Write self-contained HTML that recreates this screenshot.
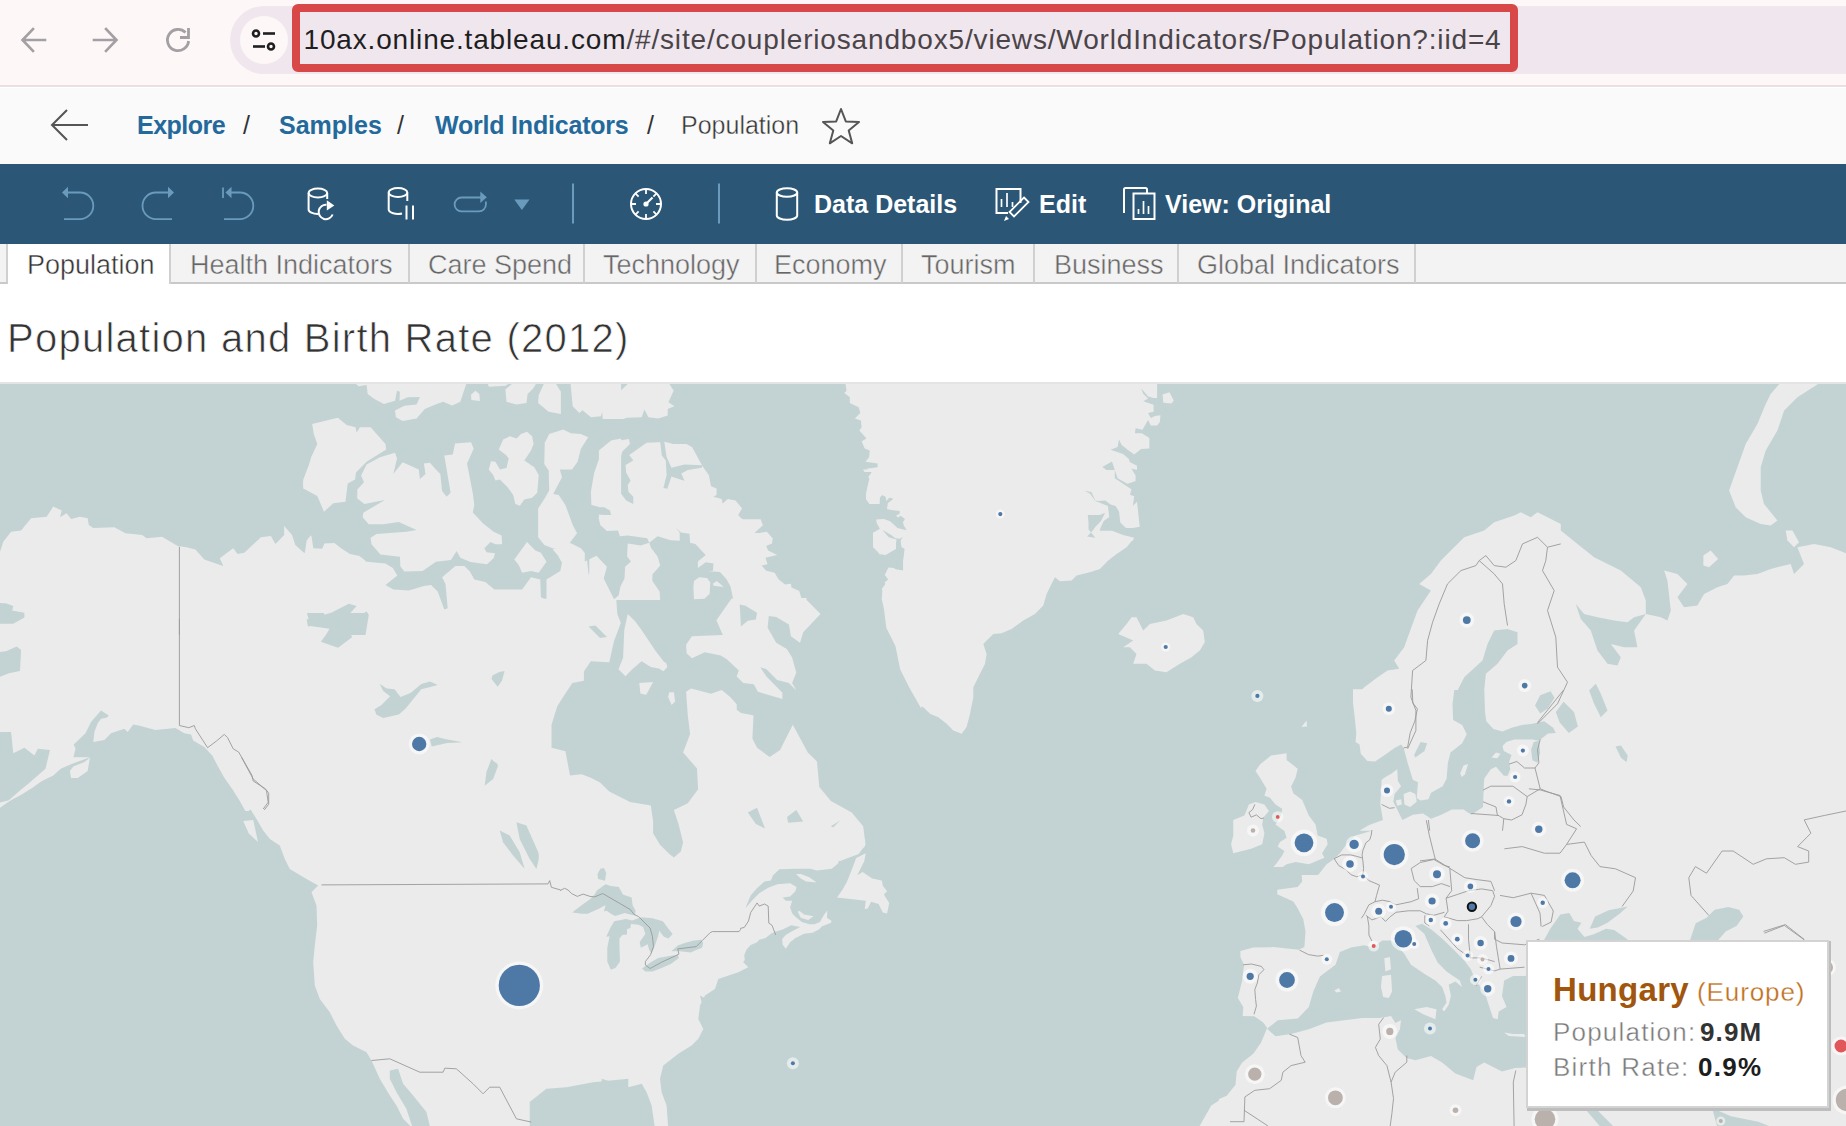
<!DOCTYPE html>
<html><head><meta charset="utf-8">
<style>
*{margin:0;padding:0;box-sizing:border-box}
html,body{width:1846px;height:1126px;overflow:hidden;background:#fff;font-family:"Liberation Sans",sans-serif}
.abs{position:absolute}
#chrome{position:absolute;left:0;top:0;width:1846px;height:87px;background:#fdf7f8;border-bottom:2px solid #eadfe3}
#pill{position:absolute;left:230px;top:6px;width:1700px;height:68px;border-radius:34px;background:#f0e6ee}
#pillc{position:absolute;left:240px;top:16px;width:48px;height:48px;border-radius:24px;background:#fdf7f8}
#redbox{position:absolute;left:292px;top:4px;width:1226px;height:68px;border:8px solid #d94848;border-radius:6px}
#url{position:absolute;left:303.5px;top:22px;font-size:28px;line-height:36px;white-space:nowrap;color:#1f1f1f;letter-spacing:0.84px}
#url span{color:#4a4448}
#crumbs{position:absolute;left:0;top:88px;width:1846px;height:76px;background:#fafafa}
.crumb{position:absolute;top:108px;font-size:25px;line-height:34px;white-space:nowrap}
.cb{color:#23699b;font-weight:bold}
#toolbar{position:absolute;left:0;top:164px;width:1846px;height:80px;background:#2b5676}
.tbtxt{position:absolute;top:188px;color:#fff;font-weight:bold;font-size:25px;line-height:32px;white-space:nowrap}
#tabs{position:absolute;left:0;top:244px;width:1846px;height:40px;background:#f3f3f3;border-bottom:2px solid #c9c9c9}
.tab{position:absolute;top:246px;height:40px;border-right:2px solid #d0d0d0;color:#666;font-size:27px;line-height:38px;white-space:nowrap;-webkit-text-stroke:0.45px #f3f3f3}
#title{position:absolute;left:7px;top:314px;font-size:40px;line-height:48px;color:#333;white-space:nowrap;letter-spacing:1.25px;-webkit-text-stroke:0.7px #fff}
.tt{white-space:nowrap;line-height:32px}
#mapwrap{position:absolute;left:0;top:382px;width:1846px;height:744px;background:#c3d3d3;border-top:2px solid #e4e4e4;overflow:hidden}
</style></head><body>
<div id="chrome"></div>
<div id="pill"></div>
<div id="pillc"></div>
<svg class="abs" style="left:0;top:0" width="300" height="80">
 <g fill="none" stroke="#a39fa2" stroke-width="2.6" stroke-linecap="square">
  <path d="M45 40H24M33 29L22.5 40L33 51"/>
  <path d="M94 40H115M106 29L116.5 40L106 51"/>
 </g>
 <path d="M188.6 41A10.6 10.6 0 1 1 185.5 32.5" fill="none" stroke="#a39fa2" stroke-width="2.8"/>
 <path d="M188.5 28V37.5H180" fill="none" stroke="#a39fa2" stroke-width="2.8"/>
 <g stroke="#1f1f1f" stroke-width="2.6" fill="none">
  <circle cx="256" cy="33.5" r="3"/><path d="M263 33.5H275"/>
  <circle cx="271" cy="46.5" r="3"/><path d="M253 46.5H265"/>
 </g>
</svg>
<div id="redbox"></div>
<div id="url">10ax.online.tableau.com<span>/#/site/coupleriosandbox5/views/WorldIndicators/Population?:iid=4</span></div>

<div id="crumbs"></div>
<svg class="abs" style="left:40px;top:100px" width="60" height="50">
 <path d="M48 25H13M27 10L12 25L27 40" fill="none" stroke="#555" stroke-width="2"/>
</svg>
<div class="crumb cb" style="left:137px;letter-spacing:-0.5px">Explore</div>
<div class="crumb" style="left:243px;color:#333">/</div>
<div class="crumb cb" style="left:279px">Samples</div>
<div class="crumb" style="left:397px;color:#333">/</div>
<div class="crumb cb" style="left:435px;letter-spacing:-0.2px">World Indicators</div>
<div class="crumb" style="left:647px;color:#333">/</div>
<div class="crumb" style="left:681px;color:#333;-webkit-text-stroke:0.4px #fafafa">Population</div>
<svg class="abs" style="left:818px;top:104px" width="46" height="46">
 <path d="M23 5L27.8 17.4L41 18L30.7 26.4L34.2 39.3L23 32L11.8 39.3L15.3 26.4L5 18L18.2 17.4Z" fill="none" stroke="#555" stroke-width="2" stroke-linejoin="round"/>
</svg>

<div id="toolbar"></div>
<svg class="abs" style="left:0;top:164px" width="1400" height="80">
 <g transform="translate(0,-164)">
 <g fill="none" stroke="#6a9bbd" stroke-width="1.8">
  <path d="M67 192.5H80A13.3 13.3 0 0 1 80 219.1H64"/>
  <path d="M168.8 192.5H155.8A13.3 13.3 0 0 0 155.8 219.1H172"/>
  <path d="M231 192.5H240A13.3 13.3 0 0 1 240 219.1H224"/>
  <path d="M223 187.5V198"/>
  
  <path d="M481 197.5H461.5A6.9 6.9 0 0 0 461.5 211.3H479A6.9 6.9 0 0 0 485.9 204.4V201.5"/>
  <path d="M573 183.5V223.5M719 183.5V223.5" stroke-width="2"/>
 </g>
 <g fill="#6a9bbd">
  <path d="M62 192.5L68 186.8V198.2Z"/>
  <path d="M174 192.5L168 186.8V198.2Z"/>
  <path d="M225.5 192.5L231.5 186.8V198.2Z"/>
  <path d="M486.8 197.2L480.3 191.5V202.9Z"/>
  <path d="M514.3 199.6H529.5L521.9 210Z"/>
 </g>
 <g fill="none" stroke="#fff" stroke-width="2">
  <ellipse cx="317.9" cy="193" rx="9.3" ry="4.5"/>
  <path d="M308.6 193V209.5A9.3 4.5 0 0 0 318 214"/>
  <path d="M327.2 193V199"/>
  <path d="M332.6 214.5A7.2 7.2 0 1 1 326.5 204.8"/>
  <ellipse cx="398" cy="192.5" rx="9.3" ry="4.5"/>
  <path d="M388.7 192.5V209.5A9.3 4.5 0 0 0 402 213.5"/>
  <path d="M407.3 192.5V201"/>
  <path d="M406.5 205.5V219.5M413 205.5V219.5"/>
  <circle cx="646" cy="204" r="15"/>
  <path d="M646 189.5V194M646 214V218.5M631.5 204H636M656 204H660.5M635.7 193.7L638.6 196.6M656.3 193.7L653.4 196.6M635.7 214.3L638.6 211.4M656.3 214.3L653.4 211.4" stroke-width="1.8"/>
  <path d="M646 204L652.5 197.5" stroke-width="2.2"/>
  <circle cx="646" cy="204" r="1.6" fill="#fff"/>
  <ellipse cx="787" cy="192.5" rx="10.2" ry="4.3"/>
  <path d="M776.8 192.5V215.5A10.2 4.3 0 0 0 797.2 215.5V192.5"/>
  <path d="M1020.5 203V189H996.5V213H1008"/>
  <path d="M1001.5 207V199M1007 207V193M1012.5 207V202" stroke-width="1.7"/>
  <path d="M1024 197.5L1028.5 202L1014 216.5L1009.5 212Z" stroke-width="1.8"/>
  <path d="M1133.5 219V193.5H1154.5V219Z"/>
  <path d="M1124 213V189.5A1.5 1.5 0 0 1 1125.5 188H1145.5A1.5 1.5 0 0 1 1147 189.5V193"/>
  <path d="M1138.5 214V209M1143.5 214V201M1148.5 214V206" stroke-width="1.7"/>
 </g>
 <g fill="#fff">
  <path d="M326.8 200.3L334.3 205.6L326.8 210.6Z"/>
  <path d="M1006 216L1009 219L1004 221Z"/>
 </g>
 </g>
</svg>
<div class="tbtxt" style="left:814px">Data Details</div>
<div class="tbtxt" style="left:1039px">Edit</div>
<div class="tbtxt" style="left:1165px">View: Original</div>
<div id="tabs"></div>
<div class="abs" style="left:0;top:244px;width:8px;height:40px;border-right:2px solid #d0d0d0;border-bottom:2px solid #c9c9c9;background:#f3f3f3"></div>
<div class="abs" style="left:8px;top:244px;width:163px;height:40px;background:#fff;border-right:2px solid #d0d0d0"></div>
<div class="tab" style="left:27px;color:#333;border:none;-webkit-text-stroke:0.45px #fff">Population</div>
<div class="abs" style="left:408px;top:244px;width:2px;height:39px;background:#d0d0d0"></div>
<div class="abs" style="left:583px;top:244px;width:2px;height:39px;background:#d0d0d0"></div>
<div class="abs" style="left:755px;top:244px;width:2px;height:39px;background:#d0d0d0"></div>
<div class="abs" style="left:901px;top:244px;width:2px;height:39px;background:#d0d0d0"></div>
<div class="abs" style="left:1033px;top:244px;width:2px;height:39px;background:#d0d0d0"></div>
<div class="abs" style="left:1177px;top:244px;width:2px;height:39px;background:#d0d0d0"></div>
<div class="abs" style="left:1414px;top:244px;width:2px;height:39px;background:#d0d0d0"></div>
<div class="tab" style="left:190px;border:none">Health Indicators</div>
<div class="tab" style="left:428px;border:none">Care Spend</div>
<div class="tab" style="left:603px;border:none">Technology</div>
<div class="tab" style="left:774px;border:none">Economy</div>
<div class="tab" style="left:921px;border:none">Tourism</div>
<div class="tab" style="left:1054px;border:none">Business</div>
<div class="tab" style="left:1197px;border:none">Global Indicators</div>
<div id="title">Population and Birth Rate (2012)</div>
<div id="mapwrap"></div>
<!--MAP--><svg id="mapsvg" style="position:absolute;left:0;top:0" width="1846" height="1126" viewBox="0 0 1846 1126">
<defs><clipPath id="mc"><rect x="0" y="384" width="1846" height="742"/></clipPath></defs>
<g clip-path="url(#mc)">
<g fill="#ebebeb"><path d="M-1.1,555.0 3.3,541.7 11.1,531.7 21.1,530.6 31.1,518.3 46.6,516.8 53.3,506.6 61.7,510.6 60.0,517.2 66.6,513.2 71.1,519.0 79.9,516.8 87.7,518.3 88.8,525.0 93.3,527.9 114.4,527.2 125.5,533.2 142.1,535.0 146.6,538.3 162.1,536.8 177.7,546.1 186.5,547.2 195.4,549.4 204.3,559.4 223.2,566.1 219.8,558.3 233.2,548.3 237.6,553.9 244.3,552.8 260.9,537.2 270.9,536.1 275.4,543.9 284.2,535.0 284.2,526.1 292.0,535.0 295.3,545.0 305.3,553.9 307.6,539.4 310.9,535.0 310.9,634.9 -1.1,634.9Z"/><path d="M303.1,482.8 308.7,466.2 310.9,466.2 310.9,490.6 303.8,488.4Z"/><path d="M-1.1,618.9 310.9,618.9 310.9,870.9 297.6,870.9 295.3,863.2 284.2,855.4 280.2,844.3 275.4,831.0 266.0,827.6 264.3,815.4 260.9,808.8 255.4,805.4 248.7,811.0 245.4,811.0 239.8,801.0 232.1,788.8 224.3,777.7 218.1,766.6 212.7,755.9 204.3,747.0 193.2,740.4 191.0,734.4 184.3,733.3 175.4,727.9 155.4,729.9 138.8,725.5 133.2,724.4 127.7,732.1 124.4,728.8 111.0,733.3 104.4,739.9 93.3,742.1 94.4,732.1 97.7,723.3 101.0,718.8 106.6,717.7 108.8,715.5 101.0,710.6 91.0,722.1 85.5,733.3 73.7,744.4 75.5,748.8 73.3,757.7 66.6,763.2 53.3,775.4 40.0,782.1 22.2,792.1 13.3,798.8 -1.1,807.6Z"/><path d="M69.9,771.0 73.3,766.6 84.4,762.1 89.9,757.7 87.7,771.0 77.7,778.1 71.1,778.1Z"/><path d="M243.2,821.0 253.2,819.9 258.0,842.1 248.7,833.2Z"/><path d="M466.6,382.9 460.3,401.8 452.1,405.5 443.2,401.8 436.6,404.0 424.8,408.9 416.6,418.4 402.6,421.1 395.9,417.3 395.0,410.6 404.4,405.8 416.6,404.4 419.9,396.9 407.7,397.3 399.5,400.7 399.9,391.8 397.0,390.7 395.0,400.7 383.9,404.0 374.4,399.1 367.7,394.0 366.6,385.1 358.8,386.2 354.4,382.9Z"/><path d="M471.4,400.0 471.0,394.7 475.4,390.7 479.4,394.0 479.9,400.9Z"/><path d="M509.9,382.9 505.4,385.8 488.8,386.7 487.6,382.9Z"/><path d="M513.2,382.9 536.5,382.9 533.2,388.4 527.6,394.0 526.5,402.9 516.5,404.4 506.5,401.8 505.4,389.6Z"/><path d="M555.4,382.9 560.9,391.8 560.9,414.0 548.7,411.8 538.1,402.9 538.7,395.1 544.3,382.9Z"/><path d="M621.1,382.9 621.1,419.1 603.1,419.1 602.5,410.6 600.9,416.2 590.9,417.3 582.5,410.2 579.4,412.9 572.7,406.2 570.5,382.9Z"/><path d="M312.2,424.0 337.8,417.8 346.6,425.1 355.5,427.3 356.6,432.4 360.0,427.3 370.6,427.3 385.5,444.0 386.2,449.5 366.6,461.7 356.0,472.4 355.1,479.5 347.7,483.5 345.5,501.7 333.3,503.3 324.0,511.7 317.3,496.1 303.3,488.4 303.3,479.5 308.9,465.1 311.1,457.3 317.3,444.0 313.8,434.0Z"/><path d="M361.1,475.5 366.6,464.4 379.9,457.3 395.0,452.8 397.0,458.4 393.3,473.9 402.6,462.2 418.8,469.5 419.9,479.0 425.5,473.9 423.9,463.5 429.9,462.8 435.9,469.5 440.3,473.9 442.1,491.0 446.6,496.8 450.6,492.8 444.3,455.5 452.8,454.6 455.0,443.5 471.0,442.2 473.7,448.8 467.0,463.5 472.8,493.3 474.3,505.0 472.8,512.4 483.2,523.5 493.6,531.7 501.6,535.5 502.1,544.3 495.4,544.3 490.5,542.1 484.3,548.3 486.5,552.3 495.0,553.2 493.6,558.3 487.0,564.3 470.5,562.1 460.3,557.7 456.6,551.0 451.0,559.9 435.9,561.7 422.6,571.0 404.4,571.6 400.4,566.5 399.9,556.8 380.4,554.5 371.5,544.3 370.6,537.7 376.6,533.9 406.6,531.7 416.6,530.1 398.8,522.1 383.3,524.3 368.8,524.3 362.6,517.2 363.3,512.8 384.8,499.9 364.4,503.9 357.3,498.4 357.3,489.5 364.0,482.2Z"/><path d="M488.8,469.5 491.0,461.3 495.4,461.7 499.9,469.5 506.5,467.9 508.7,458.4 506.5,455.5 498.8,449.5 503.2,439.5 509.9,436.2 516.5,438.4 521.0,434.0 527.0,431.7 532.1,436.2 533.6,444.0 531.0,450.6 524.3,460.6 534.3,467.3 538.7,475.0 537.2,492.8 532.1,497.7 524.3,499.5 519.8,505.7 515.4,503.9 513.2,495.0 507.6,487.3 499.9,479.5 495.4,480.6 493.2,475.0Z"/><path d="M546.5,439.5 549.2,434.0 563.2,429.5 570.9,433.3 580.9,434.0 588.2,437.3 580.9,448.8 577.6,461.7 572.0,469.5 559.8,469.5 562.0,477.3 553.2,493.9 558.7,495.0 565.4,505.0 572.7,525.0 577.1,533.2 569.8,542.8 561.6,550.1 552.7,548.3 544.3,545.0 538.1,537.2 538.1,508.4 544.3,499.0 549.2,490.6 548.7,470.6 544.3,463.9 544.7,442.8Z"/><path d="M590.9,491.7 594.2,472.8 602.0,450.6 610.9,440.6 621.1,438.4 621.1,515.0 610.9,514.6 606.5,508.8 591.4,505.0Z"/><path d="M595.4,517.2 621.1,519.5 621.1,537.2 613.1,537.2 605.3,530.6 598.7,523.9Z"/><path d="M298.9,552.8 304.9,552.8 306.7,540.6 311.5,536.1 313.3,548.3 322.2,548.8 324.4,543.4 334.4,543.0 341.1,548.3 350.0,553.9 359.5,556.1 366.6,561.7 385.5,563.4 392.8,567.9 397.3,575.4 385.5,585.0 393.3,589.4 408.8,590.5 423.9,586.1 431.0,585.0 437.7,591.6 444.3,609.4 447.7,608.3 445.5,583.9 442.1,577.2 455.4,566.1 464.3,566.1 469.9,571.6 474.3,579.4 485.4,582.1 494.3,589.4 522.1,589.4 531.0,577.2 540.3,579.4 540.9,597.2 546.5,599.9 546.5,579.4 560.3,571.0 562.0,562.8 557.6,555.0 552.7,549.4 569.8,542.8 580.9,548.3 586.5,555.0 588.7,575.0 595.4,559.4 602.0,556.1 607.6,566.1 606.5,583.9 615.3,597.2 621.1,603.8 621.1,634.9 298.9,634.9Z"/><path d="M514.3,559.4 527.0,542.1 535.4,550.6 540.9,552.8 546.5,561.7 538.7,572.8 531.0,571.0 522.1,572.8 518.7,565.0Z"/><path d="M598.9,382.9 608.9,382.9 621.1,390.2 628.9,382.9 668.8,382.9 673.7,390.7 668.4,402.2 674.4,406.2 667.7,408.9 667.7,415.5 658.2,418.4 648.4,417.3 644.4,409.5 641.7,417.3 626.6,417.8 623.3,419.1 602.7,419.1 602.2,410.6 598.9,410.6Z"/><path d="M921.1,382.9 921.1,634.9 886.5,634.9 883.1,626.1 884.2,615.0 881.6,603.8 882.5,588.3 888.2,579.4 884.7,575.0 888.2,567.9 903.1,570.5 903.1,559.4 914.9,557.2 903.8,556.1 909.1,543.4 907.6,530.6 904.7,517.2 898.7,506.6 887.6,505.0 893.6,498.4 886.5,497.3 880.2,493.9 879.4,503.9 869.8,503.9 866.0,499.5 866.0,493.9 867.6,486.2 869.1,479.5 872.0,472.8 866.5,468.8 877.6,467.3 877.6,463.5 865.4,461.7 869.1,457.3 869.8,450.6 864.7,448.4 861.6,441.3 866.5,438.4 859.4,430.6 861.6,427.3 860.9,420.6 854.9,418.4 860.3,412.9 858.7,407.3 849.8,402.9 849.8,397.3 844.3,392.9 846.5,390.7 845.4,382.9Z"/><path d="M873.1,532.8 880.9,528.3 888.7,537.2 896.5,539.4 895.4,548.3 885.4,555.0 878.7,552.8 873.1,547.2Z"/><path d="M598.9,450.6 608.9,442.2 628.9,439.1 630.0,444.0 622.2,451.7 617.3,469.5 620.4,477.3 620.4,492.8 626.2,500.6 633.3,503.9 633.3,496.8 628.4,491.7 627.8,485.0 630.6,480.6 626.2,472.8 625.5,465.1 633.3,460.6 629.3,455.1 646.6,442.8 658.8,442.2 664.4,441.7 673.3,444.0 686.6,444.0 692.2,447.3 702.2,465.7 708.8,475.0 711.0,486.2 716.6,488.4 716.6,495.0 713.3,496.8 721.7,499.0 722.6,503.5 727.7,499.0 735.5,500.6 742.1,508.4 738.1,515.0 744.8,521.7 751.0,522.1 758.1,519.9 763.9,525.7 755.4,531.0 760.3,533.2 759.4,539.4 766.1,532.3 772.1,537.2 772.8,543.4 766.1,547.2 771.0,548.8 776.5,555.4 765.4,556.1 766.1,561.7 761.7,565.7 775.0,573.9 777.7,579.4 784.3,585.0 791.4,585.0 799.4,592.7 801.6,599.4 806.5,597.6 807.0,605.6 815.0,605.0 819.8,609.4 818.7,618.3 812.1,623.8 810.5,630.5 805.4,634.9 598.9,634.9Z"/><path d="M918.3,382.3 1141.5,382.3 1143.2,390.7 1149.9,399.0 1157.2,382.3 1157.2,404.0 1153.2,410.7 1161.5,415.6 1154.9,420.6 1153.2,430.6 1148.2,435.6 1149.2,447.3 1136.5,454.0 1139.9,498.9 1139.9,527.3 1134.9,537.3 1126.6,547.2 1116.6,553.9 1108.2,560.6 1099.9,568.9 1089.9,572.2 1076.6,575.6 1071.6,580.6 1059.9,581.2 1054.9,577.2 1049.9,587.2 1046.6,593.9 1043.3,605.5 1034.9,613.9 1023.3,620.5 1011.6,628.9 1001.6,633.2 993.3,633.9 986.6,640.5 983.3,643.9 986.6,653.9 985.0,663.8 980.0,673.8 973.3,687.2 973.3,697.2 970.0,713.8 966.6,727.1 961.6,733.8 953.3,730.5 946.7,723.8 938.3,717.2 930.0,713.8 923.3,707.2 918.3,705.5Z"/><path d="M1162.5,394.0 1168.2,392.3 1173.2,399.0 1171.5,404.0 1163.2,402.3Z"/><path d="M1118.2,633.9 1126.6,623.9 1131.6,617.2 1136.5,617.2 1143.2,630.5 1149.9,623.9 1158.2,622.2 1166.5,620.5 1174.9,617.2 1183.2,613.9 1193.2,617.2 1196.5,623.9 1203.2,630.5 1204.8,642.2 1199.8,650.5 1191.5,657.2 1179.9,663.8 1166.5,672.2 1154.9,670.5 1146.5,663.8 1133.2,663.8 1136.5,653.9 1129.9,647.2 1123.2,647.2 1133.2,640.5Z"/><path d="M1301.5,727.1 1306.5,720.5 1307.1,726.5Z"/><path d="M1354.3,760.5 1354.9,697.2 1364.3,687.2 1377.6,677.2 1387.6,670.5 1399.2,668.8 1394.2,660.5 1404.2,647.2 1412.6,623.9 1417.6,610.5 1430.9,590.6 1419.2,583.9 1430.9,573.9 1440.9,560.6 1450.9,550.6 1464.2,537.3 1484.2,530.6 1494.2,522.3 1514.2,515.6 1520.8,512.3 1530.8,517.3 1537.5,512.3 1547.5,517.3 1560.8,523.9 1560.8,530.6 1577.5,543.9 1594.1,557.2 1620.8,570.6 1640.8,587.2 1645.8,600.5 1645.8,613.9 1660.8,617.2 1667.4,620.5 1670.8,610.5 1667.4,580.6 1664.1,570.6 1677.4,573.9 1687.4,583.9 1677.4,597.2 1684.1,607.2 1697.4,605.5 1704.1,593.9 1717.4,587.2 1727.4,583.9 1734.1,575.6 1744.1,575.6 1757.4,573.9 1770.7,568.9 1790.7,563.9 1794.0,573.9 1804.0,563.9 1797.4,547.2 1814.0,543.9 1830.7,547.2 1847.7,553.9 1847.7,760.5Z"/><path d="M1703.4,555.6 1710.7,550.6 1718.1,558.9 1709.1,567.2 1703.4,565.6Z"/><path d="M1729.1,490.6 1737.4,467.3 1745.7,444.0 1757.4,424.0 1765.7,404.0 1770.7,394.0 1780.7,382.3 1820.7,382.3 1797.4,397.3 1784.0,410.7 1777.4,430.6 1765.7,450.6 1760.7,467.3 1760.7,490.6 1764.0,503.9 1777.4,520.6 1770.7,525.6 1760.7,523.9 1745.7,517.3 1735.7,507.3Z"/><path d="M1785.7,530.6 1792.4,530.6 1799.0,542.2 1794.0,547.2 1787.4,540.6Z"/><path d="M616.7,757.3 616.7,1128.8 413.1,1128.8 403.1,1118.8 396.5,1105.5 389.8,1095.5 379.8,1078.8 371.5,1060.5 366.5,1052.2 353.1,1045.5 344.8,1038.8 336.5,1025.5 329.8,1012.2 319.8,998.9 314.8,985.5 313.2,962.2 314.8,945.6 317.2,925.6 316.5,905.6 311.5,892.3 318.2,885.6 306.5,878.9 289.8,868.9 284.8,858.9 279.8,845.6 269.9,839.0 263.2,830.6 256.5,819.0 248.2,805.6 239.9,792.3 233.2,779.0 219.9,769.0 213.2,757.3Z"/><path d="M-1.7,797.3 6.7,792.3 20.0,779.0 33.3,765.7 43.3,757.3 90.0,757.3 71.6,764.0 60.0,769.0 46.6,777.3 33.3,787.3 20.0,795.6 10.0,800.6 -1.7,809.0Z"/><path d="M613.3,757.3 809.9,757.3 818.2,772.3 821.6,785.7 828.2,799.0 841.5,805.6 851.5,810.6 854.9,822.3 863.2,825.6 864.9,842.3 861.5,852.3 848.2,855.6 834.9,865.6 821.6,870.6 804.9,868.9 784.9,868.9 771.6,875.6 761.6,885.6 746.6,907.3 754.9,902.3 766.6,903.9 768.9,918.9 774.9,933.9 793.2,925.6 821.6,910.6 831.5,920.6 821.6,925.6 804.9,932.2 788.2,943.9 784.9,948.2 781.6,940.6 771.6,937.2 761.6,942.2 748.3,948.9 743.3,962.2 748.3,967.2 738.3,972.2 718.3,978.9 714.9,988.9 705.0,995.5 700.0,1005.5 698.3,1018.9 703.3,1028.9 698.3,1038.8 691.6,1045.5 678.3,1053.8 663.3,1065.5 660.0,1078.8 661.6,1092.2 666.6,1105.5 668.3,1128.8 613.3,1128.8Z"/><path d="M836.5,900.6 844.9,885.6 848.2,872.3 854.9,862.3 863.2,853.9 865.5,858.9 859.9,872.3 868.2,882.3 878.2,888.9 886.5,895.6 889.9,902.3 886.5,913.9 881.5,905.6 871.5,907.3 864.9,910.6 861.5,900.6 848.2,900.6Z"/><path d="M794.9,874.9 804.9,873.9 816.6,882.3 806.6,882.9Z"/><path d="M761.6,885.6 771.6,882.3 788.2,883.9 801.6,892.3 796.6,898.9 788.2,897.3 781.6,905.6 768.3,905.6 754.9,902.9Z"/><path d="M796.6,910.6 808.2,913.9 811.6,920.6 798.2,917.2Z"/><path d="M1198.0,1128.8 1211.3,1105.5 1231.7,1092.2 1231.7,1128.8Z"/><path d="M1466.5,733.3 1464.3,744.4 1455.8,758.2 1450.9,766.6 1446.9,777.7 1444.3,788.8 1439.8,795.5 1428.7,798.8 1417.6,799.9 1416.5,793.3 1415.4,777.7 1411.0,764.4 1405.4,747.7 1397.7,753.7 1388.8,758.2 1375.4,762.6 1366.6,758.2 1359.9,742.2 1356.6,733.3 1353.2,733.3Z"/><path d="M1531.1,950.9 1302.2,950.9 1303.3,935.4 1304.4,922.1 1302.2,908.7 1295.5,899.9 1276.6,895.4 1277.7,888.8 1286.6,886.5 1299.9,884.3 1302.2,877.7 1308.8,877.7 1317.7,875.4 1326.6,864.3 1334.4,858.8 1339.9,853.2 1346.6,844.3 1355.5,835.5 1371.0,831.0 1373.2,825.5 1384.3,824.4 1382.1,808.8 1380.3,793.3 1382.1,777.7 1388.8,773.3 1397.7,768.8 1398.8,779.9 1395.4,786.6 1393.2,795.5 1397.7,804.4 1402.1,815.5 1404.3,819.9 1413.2,817.7 1422.1,815.5 1428.7,819.9 1439.8,815.5 1450.9,811.0 1462.0,814.4 1473.2,815.5 1475.4,806.6 1482.0,797.7 1484.3,785.5 1488.7,771.1 1495.4,766.6 1502.0,764.4 1508.7,757.7 1503.1,751.1 1502.0,744.4 1515.3,740.0 1531.1,738.9Z"/><path d="M1404.3,793.3 1413.2,788.8 1417.6,797.7 1415.4,806.6 1406.5,808.8Z"/><path d="M1459.8,768.8 1466.5,764.4 1464.3,775.5 1460.9,776.6Z"/><path d="M1255.5,771.1 1260.0,764.4 1271.1,755.5 1286.6,753.3 1286.6,760.0 1297.7,768.8 1295.5,777.7 1291.1,786.6 1293.3,793.3 1302.2,799.9 1308.8,815.5 1315.5,824.4 1317.7,835.5 1326.6,838.8 1327.7,844.3 1322.1,853.2 1324.4,857.7 1308.8,864.3 1295.5,862.1 1286.6,864.3 1275.5,872.1 1270.0,871.0 1276.6,863.2 1282.2,855.4 1284.4,851.0 1277.7,846.6 1280.0,842.1 1286.6,837.7 1284.4,831.0 1275.5,824.4 1281.1,815.5 1282.2,808.8 1275.5,804.4 1270.0,797.7 1264.4,795.5 1266.6,788.8 1260.0,777.7Z"/><path d="M1231.1,844.3 1233.3,835.5 1233.3,819.9 1244.4,815.5 1248.9,804.4 1255.5,802.1 1264.4,804.4 1268.9,811.0 1263.3,817.7 1262.2,824.4 1264.4,833.2 1262.2,844.3 1251.1,848.8 1242.2,851.0 1233.3,853.2Z"/><path d="M1498.6,738.5 1847.9,738.5 1847.9,1127.1 1498.6,1127.1Z"/><path d="M1218.9,874.9 1532.0,874.9 1532.0,1126.9 1218.9,1126.9Z"/><path d="M299.1,619.1 620.9,619.1 620.9,780.9 299.1,780.9Z"/><path d="M599.1,619.1 621.7,619.1 611.3,637.3 613.9,642.5 607.8,656.4 599.1,663.3Z"/><path d="M622.5,630.4 630.3,625.2 633.8,636.5 641.6,640.8 653.7,651.2 658.1,661.6 666.7,665.1 665.0,671.1 652.0,668.5 650.3,663.3 641.6,661.6 634.7,670.3 631.2,677.2 626.0,677.2 625.1,668.5 613.9,669.4 620.8,661.6 619.9,646.0Z"/><path d="M771.6,619.1 768.1,626.9 771.6,633.9 775.1,644.3 783.7,647.7 790.7,656.4 795.9,672.0 790.7,682.4 795.9,690.2 790.7,687.6 788.9,682.4 780.3,679.8 771.6,672.0 762.9,665.9 759.5,666.8 766.4,675.5 782.9,692.8 782.0,698.9 759.5,691.1 750.8,685.9 743.9,684.1 738.7,677.2 736.9,670.3 728.3,659.9 719.6,654.7 705.7,652.1 704.0,654.7 693.6,657.3 686.7,652.9 686.7,644.3 692.7,635.6 710.9,637.3 721.3,633.9 716.1,619.1Z"/><path d="M810.6,619.1 813.2,625.2 803.7,632.1 802.0,644.3 788.9,635.6 786.3,625.2 781.1,619.1Z"/><path d="M639.9,687.6 645.1,683.3 654.6,681.5 652.0,689.3 645.9,694.5 640.7,694.5Z"/><path d="M669.3,696.3 673.7,691.9 676.3,697.1 672.8,704.9 669.3,701.5Z"/><path d="M685.8,692.8 690.1,688.5 710.9,693.7 721.3,690.2 733.5,699.7 736.9,708.4 745.6,712.7 755.1,715.3 752.5,724.0 753.4,741.3 757.7,748.3 762.9,750.0 770.7,757.8 778.5,753.5 783.7,748.3 788.1,739.6 790.7,727.5 793.3,724.0 808.0,751.7 809.8,760.4 816.7,764.7 820.2,780.9 697.1,780.9 695.3,765.6 683.2,753.5 682.3,748.3 688.4,739.6 690.1,722.3 686.7,717.1 688.4,704.9Z"/><path d="M920.9,619.1 920.9,706.7 917.2,701.5 913.8,691.1 910.3,685.9 901.6,672.0 899.9,663.3 895.6,658.1 894.7,647.7 891.2,635.6 886.0,626.9 882.6,619.1Z"/><path d="M589.3,519.3 830.7,519.3 830.7,650.7 589.3,650.7Z"/><path d="M960.4,469.5 960.4,590.4 882.1,590.4 882.1,588.3 885.8,585.1 884.8,581.9 889.0,579.2 885.3,575.0 889.0,570.7 888.5,567.5 893.8,568.0 898.6,571.8 903.9,570.2 902.9,563.8 904.5,548.9 901.3,546.7 900.7,540.3 902.9,537.1 899.7,538.7 895.4,538.2 891.2,535.0 884.8,531.3 880.0,529.1 876.8,523.3 876.2,519.6 883.7,519.0 890.1,521.2 897.5,528.1 906.6,530.2 903.9,525.4 902.9,522.2 905.0,519.0 900.7,515.8 898.1,517.4 896.0,515.8 899.7,513.7 899.7,511.0 891.2,510.0 886.9,508.9 888.0,503.0 893.8,498.8 889.6,497.2 886.4,500.9 884.8,492.9 879.4,497.7 879.4,504.1 869.3,504.1 866.1,497.7 867.2,494.5 867.7,487.1 870.9,480.7 868.2,476.9 872.0,472.1 864.5,472.1 862.9,469.5Z"/><path d="M873.0,532.9 879.4,531.3 884.8,532.9 889.0,539.3 896.0,543.0 896.0,548.9 885.8,554.7 879.4,554.2 878.4,552.1 881.6,549.9 873.0,546.7Z"/></g>
<g fill="#c3d3d3"><path d="M-8.9,602.7 6.7,603.4 13.3,606.1 12.2,610.5 24.4,612.7 24.4,617.6 13.3,623.8 -8.9,623.8Z"/><path d="M-8.9,732.1 11.1,732.1 13.3,753.2 24.4,747.7 34.4,755.5 37.8,748.8 50.0,749.9 45.5,768.8 28.9,783.2 20.0,790.5 8.9,800.3 -8.9,804.8Z"/><path d="M-8.9,653.3 6.7,651.1 16.7,646.6 21.1,650.0 20.0,671.1 8.9,673.3 -8.9,680.0Z"/><path d="M307.8,626.1 306.7,619.4 331.1,612.7 348.9,603.8 356.6,606.1 347.7,616.1 358.8,616.1 366.6,611.6 368.8,615.0 366.6,628.3 365.5,634.9 326.6,634.9 333.3,626.1 322.2,622.7 308.9,626.5Z"/><path d="M591.1,507.2 604.4,507.2 610.0,510.6 611.1,515.0 604.4,515.0 591.1,513.9Z"/><path d="M660.1,440.9 664.2,440.9 666.6,457.1 671.5,467.7 684.5,464.4 702.4,465.3 701.6,467.7 687.8,470.1 681.3,473.4 684.5,480.7 676.4,478.3 671.5,476.6 667.4,488.8 663.4,488.0 666.6,475.0 665.8,460.4 661.8,455.5Z"/><path d="M1575.8,603.9 1584.1,613.9 1597.5,617.2 1614.1,620.5 1627.5,622.2 1634.1,617.2 1645.8,613.9 1634.1,630.5 1637.4,647.2 1624.1,647.2 1610.8,643.9 1620.8,657.2 1617.5,665.5 1607.5,663.8 1597.5,650.5 1594.1,640.5 1590.8,630.5 1580.8,618.9Z"/><path d="M1494.2,630.5 1507.5,628.9 1517.5,632.2 1517.5,643.9 1507.5,650.5 1497.5,663.8 1485.9,673.8 1484.2,690.5 1485.9,717.2 1489.2,730.5 1497.5,732.1 1520.8,728.8 1540.8,723.8 1555.8,728.8 1555.8,737.1 1540.8,738.8 1524.2,747.1 1504.2,742.1 1494.2,748.8 1490.9,760.5 1449.2,760.5 1460.9,740.5 1464.2,730.5 1454.2,717.2 1452.5,703.8 1457.5,690.5 1464.2,677.2 1482.5,660.5 1487.5,643.9Z"/><path d="M1554.2,703.8 1567.5,700.5 1577.5,717.2 1579.1,728.8 1564.2,730.5 1557.5,720.5Z"/><path d="M1589.1,690.5 1595.8,683.8 1600.8,693.8 1607.5,710.5 1600.8,717.2 1594.1,703.8Z"/><path d="M1534.2,703.8 1542.5,693.8 1552.5,688.8 1554.2,703.8 1544.2,712.2Z"/><path d="M1134.1,535.1 1118.3,531.0 1105.6,532.6 1089.8,538.9 1086.6,535.8 1102.5,527.9 1093.0,526.3 1088.2,516.8 1099.3,515.2 1108.8,510.5 1105.6,501.0 1096.1,494.7 1085.1,490.9 1093.0,491.5 1102.5,497.8 1111.9,507.3 1115.1,516.8 1121.4,526.3 1135.7,532.6Z"/><path d="M1135.7,478.9 1124.6,471.0 1115.1,459.9 1102.5,456.7 1094.5,450.4 1105.6,455.1 1118.3,453.6 1124.6,459.9 1130.9,469.4 1137.2,475.7Z"/><path d="M1118.3,440.9 1124.6,452.0 1135.7,464.6 1134.1,467.8 1121.4,456.7Z"/><path d="M1143.6,388.7 1153.0,398.2 1156.2,412.5 1151.5,418.8 1146.7,403.0Z"/><path d="M389.8,1070.5 398.1,1068.8 403.1,1083.8 413.1,1095.5 426.4,1112.1 433.1,1139.3 416.4,1139.3 406.4,1108.8 396.5,1092.2 389.8,1078.8Z"/><path d="M529.7,1102.1 546.4,1088.8 566.4,1087.2 593.0,1082.2 628.3,1078.8 628.3,1139.3 529.7,1139.3Z"/><path d="M628.3,745.7 628.3,792.3 586.3,765.7 566.4,745.7Z"/><path d="M516.4,822.3 526.4,825.6 539.7,855.6 536.4,868.9 529.7,858.9 519.7,839.0Z"/><path d="M499.7,830.6 509.7,835.6 519.7,852.3 524.7,868.9 513.1,855.6 503.1,842.3Z"/><path d="M491.4,759.0 498.1,765.7 493.1,779.0 484.7,785.7 486.4,772.3Z"/><path d="M601.7,745.7 691.6,745.7 696.6,769.0 698.3,785.7 695.0,792.3 686.6,802.3 675.0,809.0 676.6,825.6 681.6,842.3 678.3,853.9 673.3,857.3 666.6,849.0 656.6,832.3 651.6,805.6 635.0,796.3 601.7,794.0Z"/><path d="M748.3,812.3 758.3,807.3 763.3,820.6 766.6,830.6 754.9,825.6Z"/><path d="M786.6,815.6 796.6,810.6 803.2,820.6 788.2,824.0Z"/><path d="M831.5,825.6 839.9,820.6 841.5,824.0Z"/><path d="M700.0,995.5 706.6,998.9 709.9,1008.9 703.3,1012.2 701.6,1002.2Z"/><path d="M601.7,1078.8 628.3,1087.2 641.7,1083.8 646.6,1092.2 651.6,1105.5 656.6,1139.3 601.7,1139.3Z"/><path d="M597.5,873.9 600.4,868.7 603.9,868.1 606.2,872.7 605.0,880.8 598.1,879.1Z"/><path d="M572.1,912.5 581.9,905.0 590.0,899.3 594.6,894.6 596.9,890.6 601.6,887.1 605.6,884.2 610.8,886.0 618.9,887.1 622.9,894.6 631.6,897.5 632.7,905.6 635.6,910.8 635.0,915.4 629.3,914.3 624.7,913.1 615.4,916.0 610.8,913.7 606.8,910.8 603.9,911.4 605.6,905.0 599.3,908.5 587.7,913.7 581.9,913.7Z"/><path d="M606.2,936.8 610.8,927.0 614.3,921.2 625.8,918.9 632.2,920.6 640.8,917.2 652.4,918.3 662.8,921.2 666.2,925.8 672.6,933.9 668.5,938.5 663.9,936.8 661.6,933.9 659.3,930.4 658.1,936.2 655.8,943.1 653.5,948.9 651.2,953.5 648.9,948.9 647.7,944.3 640.8,947.7 639.7,942.0 645.4,933.9 643.1,927.0 638.5,924.7 631.0,924.1 630.4,928.1 627.0,929.3 627.0,934.5 622.3,935.0 619.5,938.5 619.5,947.7 620.0,961.6 615.4,968.0 610.8,969.7 607.3,961.6 607.3,947.7 609.6,936.2Z"/><path d="M642.0,968.5 650.1,962.8 658.1,958.1 670.8,955.8 677.8,954.7 678.9,958.1 670.8,963.9 661.6,968.0 652.4,971.4 645.4,971.4Z"/><path d="M671.4,951.2 677.8,945.4 684.7,943.1 692.8,940.8 700.9,939.7 703.2,943.1 702.0,947.7 696.2,950.1 690.5,952.4 680.1,951.2Z"/><path d="M1414.3,755.5 1419.9,742.2 1427.6,741.1 1423.2,753.3Z"/><path d="M1543.5,941.0 1550.3,928.7 1560.3,914.6 1569.3,913.0 1573.9,921.1 1581.5,922.7 1577.5,928.7 1584.3,936.9 1593.8,934.2 1606.0,928.7 1614.2,930.1 1627.7,939.6 1627.7,945.0 1543.5,945.0Z"/><path d="M1595.1,916.5 1608.7,910.2 1627.7,906.4 1619.6,913.8 1607.4,922.7 1597.8,927.4 1589.7,928.7Z"/><path d="M1690.3,939.6 1695.7,923.3 1706.6,917.8 1714.7,909.7 1728.3,907.0 1739.2,909.7 1743.3,916.5 1736.5,926.0 1725.6,931.4 1717.4,941.0 1690.3,942.3Z"/><path d="M1584.3,1108.1 1595.1,1108.1 1614.2,1127.1 1600.6,1127.1Z"/><path d="M1712.0,1108.1 1731.0,1116.3 1758.2,1121.7 1771.8,1127.1 1717.4,1127.1Z"/><path d="M1211.1,867.1 1301.1,867.1 1302.2,881.6 1297.7,887.1 1277.3,889.8 1277.3,894.2 1293.3,901.5 1297.7,908.2 1303.3,919.3 1305.5,931.5 1304.4,947.1 1298.8,949.7 1284.4,948.2 1273.3,947.1 1253.3,947.5 1240.4,951.1 1240.4,957.1 1244.0,964.8 1242.2,980.4 1237.8,998.1 1243.3,1007.0 1242.7,1015.9 1254.4,1016.3 1263.3,1022.6 1267.1,1028.1 1261.1,1042.5 1253.3,1053.7 1242.2,1062.5 1236.7,1071.4 1235.5,1084.7 1226.7,1095.8 1211.1,1102.5Z"/><path d="M1267.1,1028.8 1277.7,1020.3 1297.7,1018.6 1308.8,1007.0 1313.3,991.5 1319.9,976.4 1335.5,964.8 1339.9,951.9 1351.0,947.5 1364.3,945.3 1373.2,947.5 1382.1,940.4 1391.0,940.4 1397.7,945.9 1404.3,953.7 1411.0,964.8 1424.3,973.7 1435.4,980.4 1442.1,987.0 1445.4,995.9 1446.5,1002.6 1442.1,1009.2 1444.3,1011.5 1448.7,1004.8 1450.9,995.9 1448.7,984.8 1455.4,981.5 1462.0,987.0 1459.8,980.4 1446.5,971.5 1437.6,962.6 1431.0,949.3 1424.3,933.7 1415.4,926.0 1422.1,923.7 1431.0,929.3 1442.1,938.6 1453.2,949.3 1464.3,960.4 1470.9,969.3 1475.4,980.4 1484.3,991.5 1488.7,1004.8 1493.1,1018.1 1497.6,1019.2 1498.7,1011.5 1506.5,1007.0 1502.0,995.9 1504.2,980.4 1513.1,975.9 1524.2,975.9 1538.9,973.7 1538.9,1067.0 1515.3,1068.1 1502.0,1071.4 1484.3,1062.5 1476.5,1067.0 1473.2,1080.3 1455.4,1073.6 1442.1,1062.5 1431.0,1055.9 1415.4,1060.3 1406.5,1058.1 1397.7,1049.2 1395.4,1038.1 1399.9,1029.2 1401.0,1020.3 1395.4,1023.0 1391.0,1015.9 1379.9,1018.1 1362.1,1018.1 1344.4,1020.3 1326.6,1022.6 1308.8,1029.2 1291.1,1034.1 1275.5,1036.3Z"/><path d="M306.9,613.1 324.3,613.1 322.5,621.7 334.7,622.6 339.9,613.1 367.6,613.1 365.9,627.8 357.2,630.4 350.3,632.1 352.0,637.3 338.1,647.7 332.9,646.0 320.8,641.7 326.0,634.7 329.5,628.7 310.4,626.1Z"/><path d="M379.7,684.1 386.7,688.5 394.5,689.3 400.5,697.1 410.9,692.8 421.3,684.1 430.0,681.5 437.8,685.0 428.3,687.6 421.3,689.3 412.7,699.7 405.7,708.4 398.8,714.5 383.2,717.9 376.3,714.5 374.5,709.3 381.5,704.9 390.1,696.3 383.2,691.1Z"/><path d="M492.4,675.5 499.3,672.0 504.6,671.1 502.0,680.7 497.6,686.7 491.5,678.9Z"/><path d="M430.0,739.6 436.9,737.0 447.3,739.6 462.9,742.2 447.3,743.1 431.7,746.5Z"/><path d="M487.2,770.8 492.4,760.4 497.6,763.9 492.4,776.0 488.1,780.0Z"/><path d="M588.6,626.9 593.0,626.1 606.8,639.1 598.2,637.3Z"/><path d="M626.9,786.9 570.4,786.9 570.4,776.0 565.2,758.7 560.0,751.7 552.2,748.3 552.2,724.0 554.8,718.8 558.3,706.7 561.8,696.3 568.7,691.1 572.2,684.1 582.6,680.7 584.3,670.3 591.2,663.3 601.6,661.6 606.8,656.4 612.0,637.3 626.9,626.9Z"/><path d="M736.9,636.5 743.9,639.1 748.2,651.2 738.7,651.2 735.2,646.0Z"/><path d="M584.8,514.8 597.8,514.8 600.4,525.2 606.9,531.1 618.0,530.4 619.9,536.3 627.7,535.6 647.2,538.2 649.2,542.8 640.7,545.4 627.7,543.4 627.1,556.4 631.0,561.6 625.1,566.8 624.5,578.5 620.6,586.3 618.6,595.4 614.1,599.3 603.7,578.5 606.9,566.8 596.5,555.8 584.8,561.6Z"/><path d="M649.2,542.8 657.6,536.3 670.6,540.2 679.7,540.8 679.7,532.4 675.8,527.8 681.0,532.4 689.5,533.7 690.1,542.8 695.3,544.1 705.7,555.1 697.9,561.6 697.9,568.1 705.7,562.3 713.5,563.6 712.9,570.7 708.3,572.0 713.5,571.4 720.0,572.0 726.5,579.2 730.4,586.3 733.0,598.0 726.5,609.7 716.1,620.1 722.6,634.4 707.0,638.3 692.7,636.4 686.2,655.2 662.8,655.2 655.0,640.9 644.6,630.5 635.5,622.7 639.4,616.2 651.1,611.0 660.2,600.6 659.6,591.5 652.4,581.1 652.4,574.6 660.2,565.5 657.6,556.4 651.1,548.0Z"/><path d="M584.8,625.3 596.5,627.9 606.9,638.3 596.5,637.7 584.8,634.4Z"/><path d="M617.3,614.9 627.7,613.6 638.1,613.6 640.1,618.8 642.0,630.5 631.6,637.0 629.0,655.2 610.8,655.2 611.5,635.7 617.3,624.0Z"/><path d="M835.2,514.8 835.2,655.2 788.9,655.2 775.9,640.9 772.0,634.4 767.5,626.6 770.1,616.2 775.9,618.8 783.7,622.7 787.6,630.5 790.2,637.0 802.6,644.8 803.9,631.8 809.7,631.8 812.3,624.0 813.6,618.8 820.1,611.0 818.2,608.4 806.5,605.2 806.5,598.0 801.3,598.0 799.3,590.9 791.5,587.6 790.9,583.7 785.0,584.4 778.5,579.2 774.6,572.7 766.2,570.7 761.6,565.5 767.5,564.2 765.5,557.7 777.2,555.1 768.1,550.6 766.2,546.0 772.0,543.4 772.7,538.2 766.8,531.7 759.0,533.0 754.5,533.0 762.9,525.2 759.0,514.8Z"/><path d="M740.2,604.5 744.7,603.9 748.6,609.7 757.7,613.6 756.4,618.8 749.9,621.4 740.8,626.6 739.5,616.2Z"/><path d="M736.9,635.7 743.4,643.5 747.3,655.2 734.3,655.2Z"/><path d="M1615.5,746.6 1621.0,745.5 1627.7,755.5 1626.6,762.2 1621.0,757.7Z"/><path d="M1340.0,690.0 1580.0,690.0 1580.0,830.0 1340.0,830.0Z"/><path d="M740.0,840.0 900.0,840.0 900.0,960.0 740.0,960.0Z"/><path d="M540.0,600.0 920.0,600.0 920.0,860.0 540.0,860.0Z"/><path d="M1040.0,384.0 1200.0,384.0 1200.0,540.0 1040.0,540.0Z"/></g>
<g fill="#ebebeb"><path d="M1414.3,1009.2 1426.5,1007.0 1436.5,1009.2 1435.4,1019.2 1424.3,1014.8Z"/><path d="M1382.1,975.9 1391.0,974.8 1392.1,991.5 1388.8,998.1 1383.2,997.0 1381.0,987.0Z"/><path d="M1384.3,958.2 1389.9,957.1 1391.0,969.3 1385.4,971.5Z"/><path d="M1334.4,990.4 1338.8,988.1 1341.0,991.5 1336.6,992.6Z"/><path d="M1504.2,1032.6 1513.1,1034.1 1524.2,1034.1 1525.3,1037.0 1508.7,1035.9Z"/><path d="M694.0,581.1 699.2,577.2 707.0,577.9 710.3,582.4 709.6,594.1 704.4,598.7 694.0,599.3 693.4,587.6Z"/><path d="M712.9,583.7 716.8,581.1 723.9,587.0 713.5,585.7Z"/><path d="M1353.0,689.3 1454.4,689.3 1452.5,704.3 1453.1,719.9 1462.2,725.1 1466.8,734.2 1462.2,743.3 1450.5,752.4 1447.9,762.8 1446.6,778.4 1442.7,786.2 1431.0,792.7 1428.4,799.2 1420.6,800.5 1416.7,797.9 1418.0,782.3 1412.8,779.7 1407.6,762.8 1403.7,747.9 1401.1,744.6 1394.6,747.9 1382.9,756.3 1375.1,761.5 1367.3,760.9 1360.8,753.7 1359.5,744.6 1355.6,742.0 1356.3,732.9 1354.3,713.4 1353.0,703.0Z"/><path d="M1484.3,689.3 1580.7,689.3 1580.7,830.7 1359.5,830.7 1368.6,825.2 1382.9,820.0 1380.3,804.4 1381.6,779.7 1385.5,777.1 1392.0,773.2 1397.2,769.3 1397.9,781.0 1401.1,786.2 1394.6,794.0 1393.3,801.8 1397.2,809.6 1402.4,820.0 1412.8,814.8 1423.2,813.5 1431.0,818.7 1441.4,814.8 1451.8,809.6 1463.5,809.6 1471.3,814.8 1475.2,812.2 1483.0,807.0 1483.7,787.5 1484.3,778.4 1490.8,769.3 1496.0,766.7 1503.8,775.8 1507.7,775.8 1510.3,769.3 1509.0,762.2 1511.6,755.0 1503.8,751.1 1502.5,745.9 1506.4,742.0 1514.2,739.4 1532.4,739.4 1538.9,740.7 1548.0,733.6 1555.8,732.9 1553.2,727.7 1544.1,721.2 1532.4,723.8 1522.0,725.1 1511.6,727.7 1502.5,731.6 1493.4,729.0 1486.3,721.2 1485.0,712.1Z"/><path d="M1403.7,794.0 1410.2,791.4 1415.4,794.0 1416.7,801.8 1410.2,807.0 1404.4,804.4Z"/><path d="M1395.9,800.5 1401.1,799.2 1401.8,804.4 1397.2,805.7Z"/><path d="M1491.5,757.6 1496.0,752.4 1500.6,753.7 1497.3,758.3Z"/><path d="M1460.3,773.2 1463.5,765.4 1468.1,764.1 1464.8,774.5 1461.6,777.1Z"/><path d="M739.5,839.5 865.2,839.5 864.7,846.4 856.2,853.9 851.9,853.3 839.1,859.2 838.1,863.5 831.7,868.8 816.7,870.4 810.4,868.8 795.4,868.8 779.4,869.3 773.0,875.2 770.9,880.5 764.5,881.6 757.1,888.0 750.7,895.4 745.3,908.2 752.8,899.7 759.2,893.3 767.7,888.0 777.3,884.2 790.1,883.2 796.5,886.9 795.4,891.2 790.1,896.5 782.6,897.6 785.8,900.8 792.2,900.8 790.1,907.2 792.2,913.6 795.4,916.7 801.8,922.1 809.3,924.2 814.6,924.2 819.9,922.1 824.2,914.6 827.4,910.4 826.9,917.8 831.7,921.0 830.6,923.1 822.1,926.3 818.9,929.5 812.5,932.7 804.0,933.8 799.7,935.9 795.4,938.1 790.1,942.3 785.8,948.7 782.6,944.5 782.1,939.1 785.8,934.9 791.2,931.7 800.2,926.9 791.2,925.3 782.6,929.5 775.2,931.7 770.9,933.8 765.6,938.1 759.2,939.7 757.1,942.3 750.7,945.0 746.4,949.8 744.3,955.1 744.8,960.6 739.5,960.6Z"/><path d="M797.6,911.4 799.7,910.9 804.0,914.6 813.6,916.2 808.2,919.9 800.8,917.8Z"/><path d="M796.0,874.1 800.8,874.1 809.3,877.3 816.7,882.6 806.1,881.6 800.8,878.4Z"/><path d="M837.0,897.6 842.3,890.1 846.6,882.6 850.9,872.0 856.2,858.1 865.8,853.3 864.2,861.3 857.3,875.2 862.6,872.0 872.2,878.4 881.8,880.5 882.8,885.8 887.1,891.2 883.9,894.4 889.2,902.9 887.1,913.6 882.8,912.5 878.6,904.0 871.1,901.8 867.9,908.2 864.7,909.3 865.8,900.8Z"/><path d="M538.8,598.8 616.2,598.8 617.3,613.9 620.8,623.1 613.9,641.6 609.3,662.3 590.8,661.2 583.9,671.6 583.9,680.8 572.3,683.1 563.1,697.0 557.3,706.2 551.5,724.7 551.5,747.8 565.4,751.2 570.0,775.5 581.6,774.3 590.8,777.8 600.0,782.4 609.3,791.6 630.0,802.0 650.8,805.5 653.1,821.6 653.1,833.2 660.0,844.7 669.3,853.9 673.9,857.4 680.8,851.6 683.1,842.4 678.5,823.9 673.9,810.1 687.8,803.2 698.1,789.3 697.0,768.5 683.1,752.4 690.1,733.9 687.8,715.4 686.1,691.7 691.0,688.4 711.1,693.7 721.7,690.0 730.2,697.0 736.7,704.3 736.7,709.7 741.1,712.9 751.7,715.0 753.5,715.4 752.4,738.5 757.0,747.8 769.7,757.0 780.1,750.1 787.0,736.2 792.8,724.7 807.8,752.4 817.0,761.6 819.3,787.0 830.9,800.9 851.7,812.4 863.2,826.2 865.5,844.7 858.6,853.9 840.1,861.1 538.8,861.1Z"/><path d="M805.5,598.8 820.5,613.9 803.2,632.3 800.0,642.7 790.9,636.2 788.9,624.5 776.2,617.1 768.8,615.9 767.6,627.7 776.2,642.7 786.8,648.9 792.1,657.5 796.3,672.5 792.1,683.1 796.3,690.5 788.9,683.1 777.1,679.9 766.5,669.3 760.2,667.2 766.5,676.6 782.4,692.8 782.4,699.0 757.9,691.7 753.8,684.3 743.2,683.1 736.7,676.6 738.8,670.4 727.2,659.6 720.8,655.4 704.8,652.2 691.9,658.2 686.6,653.3 686.1,644.8 691.9,636.2 722.8,635.1 716.4,620.3 731.4,598.8Z"/><path d="M627.7,613.9 634.7,620.8 641.6,630.0 655.4,650.8 667.0,665.8 662.4,669.3 650.8,667.0 641.6,661.2 632.3,669.3 625.4,676.2 618.5,669.3 623.1,657.7 624.3,630.0Z"/><path d="M881.7,598.8 921.2,598.8 921.2,708.5 909.4,687.7 900.1,669.3 895.5,646.2 886.3,627.7 884.0,609.2Z"/><path d="M639.3,683.1 653.1,682.0 646.2,694.7 640.4,693.5Z"/><path d="M669.3,692.3 673.9,692.3 675.1,701.6 671.6,705.0 668.1,697.0Z"/><path d="M660.5,663.5 665.8,662.3 667.4,667.0 663.5,671.3 660.0,669.3Z"/><path d="M1039.3,383.3 1157.1,383.3 1157.1,397.9 1153.6,397.9 1148.1,396.5 1141.1,388.2 1143.2,393.7 1148.1,398.5 1143.2,401.3 1153.6,404.8 1153.6,411.7 1148.1,413.1 1150.8,417.9 1155.0,415.9 1160.5,415.2 1159.8,422.1 1157.1,425.6 1150.8,425.6 1148.1,420.0 1142.5,429.7 1135.6,428.3 1134.9,433.2 1141.8,433.2 1149.4,438.0 1149.4,448.4 1141.1,449.1 1134.2,454.6 1128.7,450.5 1121.7,445.0 1119.0,439.4 1117.6,447.0 1110.6,449.8 1123.1,454.0 1128.7,458.8 1130.0,462.3 1137.0,465.7 1137.0,469.9 1131.4,468.5 1135.6,475.4 1135.6,481.0 1131.4,482.4 1127.3,483.7 1117.6,478.2 1112.0,461.6 1102.3,467.1 1106.5,469.9 1114.8,469.9 1114.8,478.2 1131.4,489.3 1130.0,494.8 1134.2,496.2 1132.8,505.9 1137.0,501.7 1139.7,526.7 1132.8,528.1 1125.9,528.1 1120.3,522.5 1119.0,511.4 1115.5,505.9 1110.6,504.5 1105.1,500.4 1098.2,501.1 1095.4,500.4 1091.3,492.1 1084.3,490.7 1089.9,493.4 1095.4,501.1 1107.9,505.9 1109.3,517.0 1103.7,521.1 1101.0,526.7 1099.6,530.8 1112.0,530.8 1123.1,535.0 1134.2,537.8 1132.8,540.7 1039.3,540.7Z"/><path d="M1162.6,394.4 1169.5,392.3 1173.7,400.6 1171.6,403.4 1163.3,402.7Z"/></g>
<g fill="#c3d3d3"><path d="M1533.7,742.0 1538.9,740.7 1540.2,752.4 1537.6,762.8 1532.4,760.2 1531.1,749.8Z"/><path d="M1535.0,705.6 1540.2,695.2 1550.6,691.3 1554.5,697.8 1548.0,708.2 1540.2,713.4Z"/><path d="M1555.8,712.1 1563.6,701.7 1574.0,712.1 1577.9,726.4 1568.8,732.9 1559.7,722.5Z"/><path d="M1414.1,755.0 1420.6,742.0 1427.1,743.3 1424.5,751.1 1415.4,757.6Z"/><path d="M739.7,604.6 745.5,605.8 757.0,612.7 755.9,619.6 747.8,620.8 740.9,626.5Z"/><path d="M588.5,626.5 595.4,625.4 607.0,636.9 600.0,638.1Z"/><path d="M747.8,812.4 757.0,807.8 765.1,828.6 755.9,823.9Z"/><path d="M787.0,817.0 796.3,810.1 803.2,821.6 788.2,822.8Z"/><path d="M830.9,826.2 840.1,820.5 833.2,827.4Z"/><path d="M671.6,787.0 677.4,784.7 675.1,792.8Z"/><path d="M1087.8,514.9 1099.6,514.9 1105.1,512.8 1101.0,521.1 1095.4,526.7 1092.6,530.8 1087.1,536.4 1095.4,537.8 1088.5,529.5 1088.5,522.5Z"/></g>
<path fill="none" stroke="#9a9a9a" stroke-width="0.9" stroke-linejoin="round" d="M179.4,618.9 179.4,725.5 188.8,727.7 194.3,725.5 195.4,728.8 207.6,747.7 216.5,741.0 224.3,734.4 227.6,737.7 233.2,748.8 238.7,752.1 252.0,775.4 253.2,781.0 265.4,788.8 268.7,793.2 268.7,804.3 264.3,809.9 M179.4,546.8 179.4,634.9 M1407.6,748.8 1415.9,730.5 1415.9,710.5 1410.9,697.2 1412.6,670.5 1425.9,660.5 1427.6,640.5 1432.6,622.2 1439.2,603.9 1447.5,583.9 1460.9,570.6 1475.9,565.6 1479.2,560.6 1485.9,555.6 1494.2,565.6 1505.9,567.2 1515.8,560.6 1522.5,543.9 1537.5,537.3 1547.5,547.2 1545.8,560.6 M1479.2,560.6 1494.2,573.9 1502.5,583.9 1504.2,603.9 1507.5,625.5 M1545.8,560.6 1542.5,570.6 1554.2,590.6 1547.5,610.5 1555.8,637.2 1557.5,667.2 1567.5,682.2 1557.5,703.8 1537.5,723.8 M1547.5,547.2 1560.8,543.9 M321.5,884.9 548.0,883.9 549.7,880.6 551.4,887.3 560.4,889.9 M371.5,1060.5 389.8,1058.8 419.8,1072.2 443.1,1072.2 444.8,1068.2 456.4,1068.8 473.1,1083.8 483.1,1093.8 489.7,1087.2 499.7,1087.2 516.4,1118.8 531.4,1122.1 M241.5,757.3 253.2,779.0 266.5,790.6 268.2,802.3 263.2,809.0 M560.0,890.6 564.6,888.3 568.1,890.0 571.5,893.5 577.3,896.4 583.1,894.1 590.0,896.4 594.6,896.9 602.7,893.5 630.4,909.6 633.9,914.3 638.5,916.6 642.0,920.0 650.1,928.1 652.4,936.2 653.5,946.6 650.6,954.7 645.4,961.6 645.4,965.1 650.1,968.5 661.6,962.2 675.5,955.8 678.9,954.1 677.8,948.9 696.2,946.6 702.0,940.8 710.1,932.7 712.4,931.6 739.0,931.6 740.7,929.3 M1763.6,931.4 1785.4,924.6 1804.4,939.6 M1254.9,804.3 1252.6,809.6 1248.9,812.6 1251.1,817.2 1256.4,814.9 1261.0,818.7 1264.0,817.9 M1371.9,830.0 1371.2,835.3 1369.7,839.8 1365.9,842.8 1362.9,850.4 1362.1,854.9 1362.9,861.0 1363.6,868.5 1362.9,874.6 M1334.2,858.7 1341.7,854.9 1350.8,854.9 1356.8,856.4 1362.1,857.9 M1334.2,858.7 1338.7,865.5 1346.3,870.0 1350.8,874.6 1356.8,876.8 1362.9,874.6 M1362.9,874.6 1368.9,880.6 1379.5,885.1 1376.5,895.7 1375.0,901.7 M1375.0,901.7 1368.9,904.8 1364.4,913.8 1361.4,918.3 M1365.9,915.3 1371.9,919.9 1381.0,916.8 1385.5,921.4 1390.1,916.8 1396.1,912.3 M1375.0,901.7 1382.5,900.2 1390.1,901.7 1396.1,904.8 1411.2,901.7 1418.7,898.7 1417.2,888.1 M1367.4,916.8 1368.9,925.9 1368.9,935.0 1371.9,941.0 M1426.3,820.2 1429.3,835.3 1433.8,853.4 1435.4,859.5 M1411.2,868.5 1420.3,862.5 1433.8,859.5 1444.4,865.5 1450.0,867.0 M1411.2,868.5 1414.2,880.6 1420.3,886.6 1432.3,886.6 1441.4,883.6 1450.0,886.6 M1396.1,912.3 1408.2,910.8 1420.3,910.8 1426.3,913.8 1433.8,915.3 1444.4,912.3 M1424.8,915.3 1424.8,922.9 1429.3,925.9 M1299.5,950.1 1308.5,954.6 1317.6,956.1 1323.6,955.3 M1420.0,860.9 1434.9,859.0 1449.8,868.3 1464.8,877.7 1476.0,879.5 1490.9,881.4 1494.6,890.7 M1449.8,868.3 1451.7,890.7 1446.1,898.2 M1446.1,898.2 1457.3,894.5 1468.5,890.7 1481.6,888.9 1492.7,890.7 1494.6,896.3 M1446.1,898.2 1448.0,911.2 1444.2,916.8 1457.3,920.6 1466.6,920.6 1477.8,918.7 1481.6,916.8 1490.9,905.6 1494.6,896.3 M1481.6,916.8 1487.2,924.3 1494.6,931.8 1494.6,939.2 1502.1,943.0 1524.5,944.8 1539.4,939.2 M1440.5,929.9 1457.3,948.5 1470.4,957.9 1481.6,957.9 1494.6,961.6 M1468.5,924.3 1468.5,939.2 1470.4,957.9 M1494.6,931.8 1496.5,946.7 1498.3,957.9 1500.2,969.1 1524.5,967.2 M1479.7,967.2 1494.6,970.9 1500.2,969.1 M1476.0,985.9 1481.6,976.5 M1243.2,964.8 1251.5,964.0 1261.4,966.4 1263.9,969.7 1258.9,974.7 1257.3,983.0 1254.8,989.6 1255.6,999.5 1256.4,1006.1 1254.0,1014.3 M1289.5,1034.2 1297.7,1037.5 1301.0,1055.6 1305.2,1062.2 1291.1,1065.6 1282.9,1072.2 1281.2,1080.4 1269.6,1088.7 1254.8,1090.3 1244.9,1096.9 1244.0,1121.7 1230.0,1121.7 M1244.0,1110.2 1268.0,1126.0 M1383.6,1017.6 1378.7,1024.3 1380.3,1039.1 1375.4,1047.4 1378.7,1055.6 1386.9,1065.6 1391.1,1082.1 1393.5,1098.6 1391.9,1113.5 1390.2,1126.0 M1406.8,1055.6 1406.8,1062.2 1395.2,1072.2 1391.1,1082.1 M1515.8,1070.5 1513.3,1082.1 1514.1,1126.0 M1504.4,848.8 1522.2,846.6 1544.4,853.2 1560.0,853.2 1566.6,844.4 M1528.9,788.8 1540.0,789.9 1560.0,795.5 1566.6,824.4 1576.6,828.8 1566.6,844.4 M1566.6,844.4 1584.4,842.1 1591.1,855.5 1599.9,866.6 1615.5,868.8 1635.5,877.7 1633.2,891.0 1622.1,906.5 M1500.0,895.4 1513.3,897.7 1531.1,893.2 1544.4,895.4 1553.3,911.0 1551.1,922.1 1542.2,926.5 M1531.1,893.2 1540.0,913.2 1541.1,926.5 M1708.8,915.4 1691.0,895.4 1688.8,877.7 1695.4,866.6 1706.5,873.2 1722.1,851.0 1733.2,851.0 1753.2,864.3 1766.5,858.8 1784.3,857.7 1795.4,864.3 1808.7,862.1 1808.7,851.0 1797.6,846.6 1810.9,833.2 1804.2,819.9 1824.2,815.5 1846.0,811.0 M1764.3,933.2 1784.3,925.4 1804.2,939.8 M1412.2,689.3 1412.8,703.0 1417.4,708.9 1414.8,721.2 1410.2,732.9 1407.6,747.2 1403.7,747.9 M1563.6,690.0 1548.0,709.5 1537.6,722.5 M1540.2,739.4 1537.6,749.8 1538.9,762.8 1535.0,768.0 M1509.0,764.1 1516.8,761.5 1524.6,768.0 1535.0,768.0 M1535.0,768.0 1540.2,788.8 1546.7,791.4 1561.0,796.6 1563.6,807.0 1574.0,820.0 1580.7,826.5 M1483.0,790.1 1490.8,786.2 1512.9,786.2 1527.2,796.6 1540.2,788.8 M1527.2,796.6 1525.9,804.4 1522.0,814.8 1511.6,820.0 1503.8,818.7 1502.5,830.7 M1483.0,801.8 1496.0,807.0 1497.3,814.8 1503.8,818.7 M1471.3,813.5 1498.6,815.5 M1428.4,820.0 1429.7,830.7 M1381.6,804.4 1389.4,808.3 1394.6,807.7 M740.0,928.5 744.3,927.4 748.5,921.0 750.7,912.5 757.1,902.9 759.2,906.1 764.5,904.0 768.2,906.1 768.8,923.1 772.0,925.3 775.7,934.9"/>
</g></svg><svg style="position:absolute;left:0;top:0" width="1846" height="1126"><defs><clipPath id="mc2"><rect x="0" y="384" width="1846" height="742"/></clipPath></defs><g clip-path="url(#mc2)"><circle cx="419.2" cy="744" r="10.5" fill="#fff" fill-opacity="0.55"/><circle cx="519.3" cy="985.4" r="24" fill="#fff" fill-opacity="0.55"/><circle cx="792.9" cy="1063.2" r="6" fill="#fff" fill-opacity="0.55"/><circle cx="1000.3" cy="514.1" r="4.5" fill="#fff" fill-opacity="0.55"/><circle cx="1165.7" cy="647" r="4.5" fill="#fff" fill-opacity="0.55"/><circle cx="1257.4" cy="695.9" r="6" fill="#fff" fill-opacity="0.55"/><circle cx="1388.8" cy="708.7" r="6.5" fill="#fff" fill-opacity="0.55"/><circle cx="1466.8" cy="620.1" r="7.5" fill="#fff" fill-opacity="0.55"/><circle cx="1524.7" cy="685.6" r="6.5" fill="#fff" fill-opacity="0.55"/><circle cx="1522.9" cy="750.6" r="6" fill="#fff" fill-opacity="0.55"/><circle cx="1515.1" cy="777" r="5.5" fill="#fff" fill-opacity="0.55"/><circle cx="1509" cy="801.4" r="5.5" fill="#fff" fill-opacity="0.55"/><circle cx="1387" cy="790.4" r="6.5" fill="#fff" fill-opacity="0.55"/><circle cx="1253" cy="830.5" r="6" fill="#fff" fill-opacity="0.55"/><circle cx="1277.7" cy="816.9" r="5.7" fill="#fff" fill-opacity="0.55"/><circle cx="1304" cy="842.8" r="13.3" fill="#fff" fill-opacity="0.55"/><circle cx="1354.1" cy="844.4" r="8.3" fill="#fff" fill-opacity="0.55"/><circle cx="1350" cy="864" r="7.9" fill="#fff" fill-opacity="0.55"/><circle cx="1363" cy="876.5" r="5.3" fill="#fff" fill-opacity="0.55"/><circle cx="1394.3" cy="854.6" r="14.3" fill="#fff" fill-opacity="0.55"/><circle cx="1437" cy="874.2" r="7.9" fill="#fff" fill-opacity="0.55"/><circle cx="1432.1" cy="901" r="7.5" fill="#fff" fill-opacity="0.55"/><circle cx="1378.7" cy="911.2" r="7.5" fill="#fff" fill-opacity="0.55"/><circle cx="1391" cy="906.7" r="5.3" fill="#fff" fill-opacity="0.55"/><circle cx="1334.5" cy="912.6" r="13.5" fill="#fff" fill-opacity="0.55"/><circle cx="1403.3" cy="938.7" r="12.5" fill="#fff" fill-opacity="0.55"/><circle cx="1414.2" cy="944" r="5" fill="#fff" fill-opacity="0.55"/><circle cx="1373.7" cy="946" r="5.5" fill="#fff" fill-opacity="0.55"/><circle cx="1472.6" cy="840.7" r="11" fill="#fff" fill-opacity="0.55"/><circle cx="1538.8" cy="829.2" r="7.5" fill="#fff" fill-opacity="0.55"/><circle cx="1470.4" cy="886.4" r="6.5" fill="#fff" fill-opacity="0.55"/><circle cx="1572.6" cy="880.3" r="11.5" fill="#fff" fill-opacity="0.55"/><circle cx="1542.7" cy="902.7" r="5.5" fill="#fff" fill-opacity="0.55"/><circle cx="1516" cy="921.5" r="9" fill="#fff" fill-opacity="0.55"/><circle cx="1430.8" cy="920" r="5.5" fill="#fff" fill-opacity="0.55"/><circle cx="1445.7" cy="923.4" r="6" fill="#fff" fill-opacity="0.55"/><circle cx="1457.3" cy="939.2" r="6" fill="#fff" fill-opacity="0.55"/><circle cx="1480.6" cy="943" r="7" fill="#fff" fill-opacity="0.55"/><circle cx="1467.6" cy="955.6" r="5.5" fill="#fff" fill-opacity="0.55"/><circle cx="1482.5" cy="959.4" r="5.5" fill="#fff" fill-opacity="0.55"/><circle cx="1511" cy="958.4" r="7" fill="#fff" fill-opacity="0.55"/><circle cx="1488.5" cy="969" r="5.5" fill="#fff" fill-opacity="0.55"/><circle cx="1475.4" cy="979.7" r="5.5" fill="#fff" fill-opacity="0.55"/><circle cx="1487.7" cy="988.7" r="7.5" fill="#fff" fill-opacity="0.55"/><circle cx="1250.2" cy="976.3" r="7.5" fill="#fff" fill-opacity="0.55"/><circle cx="1287" cy="980" r="11.5" fill="#fff" fill-opacity="0.55"/><circle cx="1326.8" cy="959.3" r="5.5" fill="#fff" fill-opacity="0.55"/><circle cx="1430" cy="1028.4" r="6" fill="#fff" fill-opacity="0.55"/><circle cx="1389.8" cy="1031.4" r="7.5" fill="#fff" fill-opacity="0.55"/><circle cx="1254.8" cy="1074.2" r="10" fill="#fff" fill-opacity="0.55"/><circle cx="1335.4" cy="1097.8" r="10.5" fill="#fff" fill-opacity="0.55"/><circle cx="1455.5" cy="1110.2" r="6" fill="#fff" fill-opacity="0.55"/><circle cx="1545" cy="1119.3" r="13.5" fill="#fff" fill-opacity="0.55"/><circle cx="1720.8" cy="1121" r="4.5" fill="#fff" fill-opacity="0.55"/><circle cx="1841" cy="1046" r="9.5" fill="#fff" fill-opacity="0.55"/><circle cx="1847" cy="1100" r="14.5" fill="#fff" fill-opacity="0.55"/><circle cx="1827" cy="967.5" r="9" fill="#fff" fill-opacity="0.55"/><circle cx="419.2" cy="744" r="7.2" fill="#4e79a7"/><circle cx="519.3" cy="985.4" r="20.6" fill="#4e79a7"/><circle cx="792.9" cy="1063.2" r="2" fill="#4e79a7"/><circle cx="1000.3" cy="514.1" r="2.1" fill="#4e79a7"/><circle cx="1165.7" cy="647" r="2.1" fill="#4e79a7"/><circle cx="1257.4" cy="695.9" r="2.1" fill="#4e79a7"/><circle cx="1388.8" cy="708.7" r="3" fill="#4e79a7"/><circle cx="1466.8" cy="620.1" r="3.9" fill="#4e79a7"/><circle cx="1524.7" cy="685.6" r="2.8" fill="#4e79a7"/><circle cx="1522.9" cy="750.6" r="2.1" fill="#4e79a7"/><circle cx="1515.1" cy="777" r="2.1" fill="#4e79a7"/><circle cx="1509" cy="801.4" r="2.2" fill="#4e79a7"/><circle cx="1387" cy="790.4" r="3" fill="#4e79a7"/><circle cx="1253" cy="830.5" r="2.3" fill="#bab0ac"/><circle cx="1277.7" cy="816.9" r="1.9" fill="#e15759"/><circle cx="1304" cy="842.8" r="9.4" fill="#4e79a7"/><circle cx="1354.1" cy="844.4" r="4.7" fill="#4e79a7"/><circle cx="1350" cy="864" r="3.8" fill="#4e79a7"/><circle cx="1363" cy="876.5" r="2" fill="#4e79a7"/><circle cx="1394.3" cy="854.6" r="10.6" fill="#4e79a7"/><circle cx="1437" cy="874.2" r="4" fill="#4e79a7"/><circle cx="1432.1" cy="901" r="3.6" fill="#4e79a7"/><circle cx="1378.7" cy="911.2" r="3.5" fill="#4e79a7"/><circle cx="1391" cy="906.7" r="2" fill="#4e79a7"/><circle cx="1334.5" cy="912.6" r="9.5" fill="#4e79a7"/><circle cx="1403.3" cy="938.7" r="8.8" fill="#4e79a7"/><circle cx="1414.2" cy="944" r="2" fill="#4e79a7"/><circle cx="1373.7" cy="946" r="2" fill="#e15759"/><circle cx="1472.6" cy="840.7" r="7.5" fill="#4e79a7"/><circle cx="1538.8" cy="829.2" r="3.7" fill="#4e79a7"/><circle cx="1470.4" cy="886.4" r="2.8" fill="#4e79a7"/><circle cx="1572.6" cy="880.3" r="8" fill="#4e79a7"/><circle cx="1542.7" cy="902.7" r="2.2" fill="#4e79a7"/><circle cx="1516" cy="921.5" r="5.6" fill="#4e79a7"/><circle cx="1430.8" cy="920" r="2.2" fill="#4e79a7"/><circle cx="1445.7" cy="923.4" r="2.4" fill="#4e79a7"/><circle cx="1457.3" cy="939.2" r="2.4" fill="#4e79a7"/><circle cx="1480.6" cy="943" r="3.2" fill="#4e79a7"/><circle cx="1467.6" cy="955.6" r="2" fill="#4e79a7"/><circle cx="1482.5" cy="959.4" r="2" fill="#bab0ac"/><circle cx="1511" cy="958.4" r="3.4" fill="#4e79a7"/><circle cx="1488.5" cy="969" r="2" fill="#4e79a7"/><circle cx="1475.4" cy="979.7" r="2" fill="#4e79a7"/><circle cx="1487.7" cy="988.7" r="3.7" fill="#4e79a7"/><circle cx="1250.2" cy="976.3" r="3.6" fill="#4e79a7"/><circle cx="1287" cy="980" r="7.9" fill="#4e79a7"/><circle cx="1326.8" cy="959.3" r="2" fill="#4e79a7"/><circle cx="1430" cy="1028.4" r="2" fill="#4e79a7"/><circle cx="1389.8" cy="1031.4" r="3.6" fill="#bab0ac"/><circle cx="1254.8" cy="1074.2" r="6.6" fill="#bab0ac"/><circle cx="1335.4" cy="1097.8" r="7.4" fill="#bab0ac"/><circle cx="1455.5" cy="1110.2" r="2.8" fill="#bab0ac"/><circle cx="1545" cy="1119.3" r="10.3" fill="#bab0ac"/><circle cx="1720.8" cy="1121" r="2" fill="#bab0ac"/><circle cx="1841" cy="1046" r="6.5" fill="#e15759"/><circle cx="1847" cy="1100" r="11.2" fill="#bab0ac"/><circle cx="1827" cy="967.5" r="6" fill="#bab0ac"/><circle cx="1471.9" cy="906.8" r="4.2" fill="#4e79a7" stroke="#111" stroke-width="2"/></g></svg><!--/MAP-->
<!--TIP-->
<div class="abs" style="left:1527px;top:941px;width:304px;height:170px;background:#bdbdbd"></div>
<div class="abs" style="left:1526px;top:940px;width:303px;height:168px;background:#fff;border:2px solid #d3d3d3"></div>
<div class="abs tt" style="left:1553px;top:974px;font-size:33px;font-weight:bold;color:#a1560e;letter-spacing:0.3px">Hungary</div>
<div class="abs tt" style="left:1697px;top:976px;font-size:26px;color:#c06f1d;letter-spacing:0.9px;-webkit-text-stroke:0.3px #fff">(Europe)</div>
<div class="abs tt" style="left:1553px;top:1016px;font-size:26px;color:#7a7a7a;letter-spacing:1.2px;-webkit-text-stroke:0.4px #fff">Population:</div>
<div class="abs tt" style="left:1700px;top:1016px;font-size:26px;font-weight:bold;color:#333;letter-spacing:1.1px">9.9M</div>
<div class="abs tt" style="left:1553px;top:1051px;font-size:26px;color:#7a7a7a;letter-spacing:1.25px;-webkit-text-stroke:0.4px #fff">Birth Rate:</div>
<div class="abs tt" style="left:1698px;top:1051px;font-size:26px;font-weight:bold;color:#1d1d1d;letter-spacing:1.3px">0.9%</div>
<!--/TIP-->
</body></html>
